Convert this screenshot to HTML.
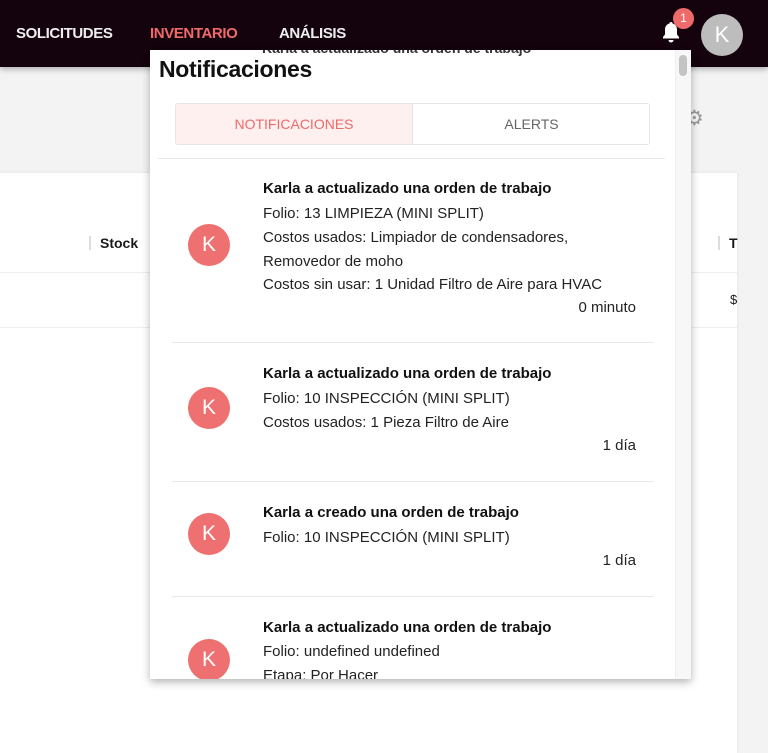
<!DOCTYPE html>
<html><head><meta charset="utf-8"><style>
*{margin:0;padding:0;box-sizing:border-box}
body{width:768px;height:741px;overflow:hidden;background:#f3f3f3;font-family:"Liberation Sans",sans-serif;position:relative;color:#1a1a1a}
.a{position:absolute}
.nav{left:0;top:0;width:768px;height:67px;background:#14030d;box-shadow:0 2px 6px rgba(0,0,0,.3)}
.nl{top:25px;font-weight:bold;font-size:15px;color:#eee;letter-spacing:-.4px}
.card{left:0;top:173px;width:737px;height:580px;background:#fff;box-shadow:0 0 3px rgba(0,0,0,.08)}
.panel{left:150px;top:50px;width:541px;height:629px;background:#fff;box-shadow:0 3px 8px rgba(0,0,0,.3);overflow:hidden}
.av{width:42px;height:42px;border-radius:50%;background:#ef7070;color:#fff;font-size:21px;text-align:center;line-height:42px}
.t{font-weight:bold;font-size:15px;color:#111}
.l{font-size:15px;color:#222}
.hr{height:1px;background:#e8e8e8;left:172px;width:482px}
.tm{font-size:15px;color:#222;text-align:right;width:200px;left:436px}
</style></head><body>
<div class="a nav"></div>
<div class="a nl" style="left:16px">SOLICITUDES</div>
<div class="a nl" style="left:150px;color:#ef6a6a">INVENTARIO</div>
<div class="a nl" style="left:279px">ANÁLISIS</div>
<svg class="a" style="left:660px;top:20px" width="22" height="24" viewBox="0 0 22 24"><path d="M11 2c-1 0-1.6.7-1.6 1.5C6.5 4.3 5 6.7 5 9.5v5L3 17v1.5h16V17l-2-2.5v-5c0-2.8-1.5-5.200-4.4-6C12.6 2.7 12 2 11 2z" fill="#fff"/><path d="M8.5 20a2.5 2.5 0 0 0 5 0z" fill="#fff"/></svg>
<div class="a" style="left:673px;top:8px;width:21px;height:21px;border-radius:50%;background:#ef6a6a;color:#fff;font-size:12px;text-align:center;line-height:21px">1</div>
<div class="a" style="left:701px;top:14px;width:42px;height:42px;border-radius:50%;background:#bdbdbd;color:#fff;font-size:22px;text-align:center;line-height:42px">K</div>
<div class="a" style="left:685px;top:106px;color:#999;font-size:21px">⚙</div>
<div class="a card"></div>
<div class="a" style="left:0;top:272px;width:737px;height:1px;background:#eee"></div>
<div class="a" style="left:0;top:327px;width:737px;height:1px;background:#eee"></div>
<div class="a" style="left:89px;top:236px;width:2px;height:14px;background:#ddd"></div>
<div class="a" style="left:100px;top:235px;font-weight:bold;font-size:14px">Stock</div>
<div class="a" style="left:718px;top:236px;width:2px;height:14px;background:#ddd"></div>
<div class="a" style="left:729px;top:235px;font-weight:bold;font-size:14px">T</div>
<div class="a" style="left:730px;top:292px;font-size:13px">$</div>
<div class="a panel">
<div class="a" style="left:112px;top:-10px;font-size:14px;font-weight:bold;color:#333">Karla a actualizado una orden de trabajo</div>
<div class="a" style="left:9px;top:6px;font-size:23px;font-weight:bold;color:#111;letter-spacing:-.3px">Notificaciones</div>
<div class="a" style="left:25px;top:53px;width:475px;height:42px;border:1px solid #e6e6e6;border-radius:3px;overflow:hidden">
<div class="a" style="left:0;top:0;width:237px;height:40px;background:#fdf0ef;border-right:1px solid #e6e6e6;color:#ef6a6a;font-size:14px;text-align:center;line-height:40px">NOTIFICACIONES</div>
<div class="a" style="left:237px;top:0;width:237px;height:40px;color:#666;font-size:14px;text-align:center;line-height:40px">ALERTS</div>
</div>
<div class="a" style="left:525px;top:0;width:16px;height:629px;background:#f7f7f7;border-left:1px solid #eee"></div>
<div class="a" style="left:529px;top:5px;width:8px;height:21px;border-radius:4px;background:#c4c4c4"></div>
</div>
<div class="a hr" style="left:158px;width:507px;top:158px"></div>
<div class="a av" style="left:188px;top:224px">K</div>
<div class="a t" style="left:263px;top:180px">Karla a actualizado una orden de trabajo</div>
<div class="a l" style="left:263px;top:205px">Folio: 13 LIMPIEZA (MINI SPLIT)</div>
<div class="a l" style="left:263px;top:229px">Costos usados: Limpiador de condensadores,</div>
<div class="a l" style="left:263px;top:253px">Removedor de moho</div>
<div class="a l" style="left:263px;top:276px">Costos sin usar: 1 Unidad Filtro de Aire para HVAC</div>
<div class="a tm" style="top:299px">0 minuto</div>
<div class="a hr" style="top:342px"></div>
<div class="a av" style="left:188px;top:387px">K</div>
<div class="a t" style="left:263px;top:365px">Karla a actualizado una orden de trabajo</div>
<div class="a l" style="left:263px;top:390px">Folio: 10 INSPECCIÓN (MINI SPLIT)</div>
<div class="a l" style="left:263px;top:414px">Costos usados: 1 Pieza Filtro de Aire</div>
<div class="a tm" style="top:437px">1 día</div>
<div class="a hr" style="top:481px"></div>
<div class="a av" style="left:188px;top:513px">K</div>
<div class="a t" style="left:263px;top:504px">Karla a creado una orden de trabajo</div>
<div class="a l" style="left:263px;top:529px">Folio: 10 INSPECCIÓN (MINI SPLIT)</div>
<div class="a tm" style="top:552px">1 día</div>
<div class="a hr" style="top:596px"></div>
<div class="a" style="left:150px;top:597px;width:525px;height:82px;overflow:hidden">
<div class="a av" style="left:38px;top:42px">K</div>
<div class="a t" style="left:113px;top:22px">Karla a actualizado una orden de trabajo</div>
<div class="a l" style="left:113px;top:46px">Folio: undefined undefined</div>
<div class="a l" style="left:113px;top:70px">Etapa: Por Hacer</div>
</div>
</body></html>
